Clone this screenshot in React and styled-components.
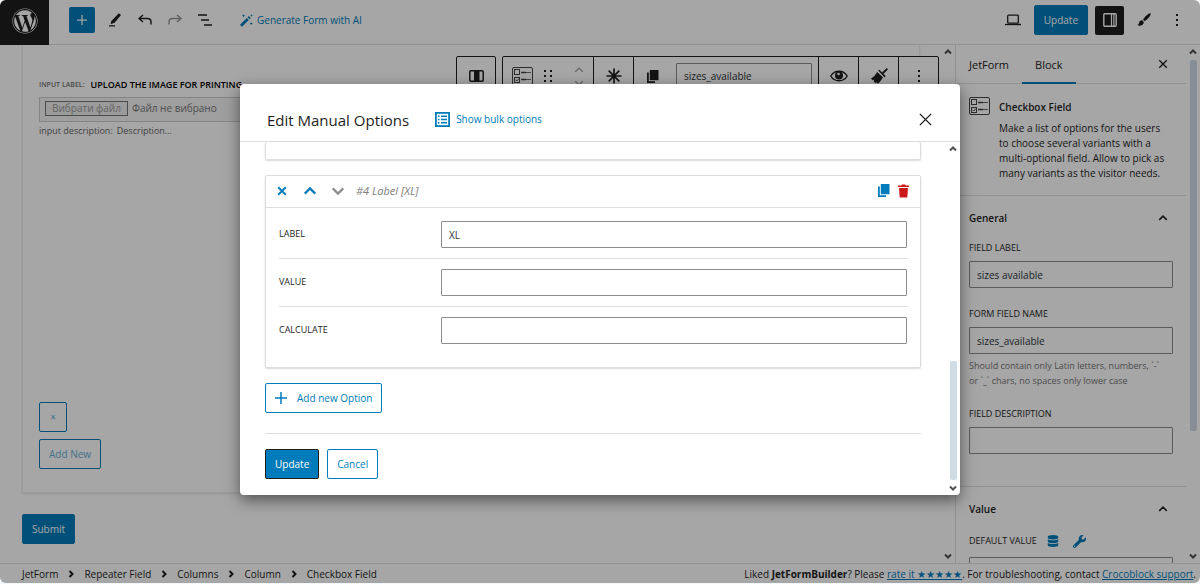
import { useState } from 'react';
import { styled, createGlobalStyle, css } from 'styled-components';
import { FaWordpress, FaDatabase, FaWrench } from 'react-icons/fa';

const GlobalStyle = createGlobalStyle`
  * {
    box-sizing: border-box;
  }

  body {
    margin: 0;
    background: #f4f7fa;
    color: #1e1e1e;
    font-family: 'Open Sans', 'Noto Sans', sans-serif;
    font-size: 10px;
    line-height: 15px;
  }

  button, input {
    font: inherit;
    color: inherit;
  }

  button {
    padding: 0;
    border: 0;
    background: none;
    cursor: pointer;
  }

  a {
    color: #007cba;
  }

  h1, h2, p {
    margin: 0;
  }

  svg {
    display: block;
    flex: none;
  }
`;

const Shell = styled.div`
  position: relative;
  display: flex;
  flex-direction: column;
  height: calc(100vh - 1px);
  overflow: hidden;
  border-radius: 6px;
  background: #fff;
`;

/* ---------- top bar ---------- */

const TopBar = styled.header`
  display: flex;
  justify-content: space-between;
  height: 45px;
  flex: none;
  padding-right: 10px;
  border-bottom: 1px solid #e0e0e0;
`;

const BarGroup = styled.div`
  display: flex;
  align-items: center;
  gap: ${({ $gap }) => $gap}px;
  height: 40px;
`;

const HomeLink = styled.a`
  display: flex;
  align-items: center;
  justify-content: center;
  align-self: flex-start;
  width: 49px;
  height: 45px;
  padding-bottom: 4px;
  margin-right: 10px;
  background: #1e1e1e;
  color: #fff;
`;

const IconButton = styled.button`
  display: flex;
  align-items: center;
  justify-content: center;
  width: ${({ $size = 20 }) => $size}px;
  height: ${({ $size = 20 }) => $size}px;
  border-radius: 2px;
  color: ${({ $color = '#1e1e1e' }) => $color};
  background: ${({ $bg = 'transparent' }) => $bg};
`;

const TextButton = styled.button`
  display: flex;
  align-items: center;
  gap: ${({ $gap = 4 }) => $gap}px;
  color: #007cba;
`;

const AiButton = styled(TextButton)`
  margin-left: 15px;
`;

const Button = styled.button`
  display: flex;
  align-items: center;
  justify-content: center;
  gap: 10px;
  min-width: 28px;
  height: 30px;
  padding: 0 9px;
  border: 1px solid #007cba;
  border-radius: 2px;
  color: #007cba;
  background: #fff;
  white-space: nowrap;

  ${({ $primary }) => $primary && css`
    color: #fff;
    background: #007cba;
    font-weight: 500;
  `}

  ${({ $focused }) => $focused && css`
    border-color: #1e1e1e;
  `}

  ${({ $faded }) => $faded && css`
    color: #66b0d6;
  `}
`;

/* ---------- scrollbar ---------- */

const Rail = styled.div`
  display: flex;
  flex-direction: column;
  align-items: center;
  flex: none;
  width: 14px;
  padding: 3px 0;
  color: #505050;
`;

const Track = styled.div`
  display: flex;
  flex-direction: column;
  justify-content: ${({ $end }) => ($end ? 'flex-end' : 'flex-start')};
  flex: 1;
  padding: 4px 0;
`;

const Thumb = styled.div`
  width: 7px;
  height: ${({ $length }) => $length};
  border-radius: 2px;
  background: #cfdbe5;
`;

function Scrollbar({ length, end }) {
  return (
    <Rail>
      <Chevron dir="up" size={8} weight={4} />
      <Track $end={end}>{length && <Thumb $length={length} />}</Track>
      <Chevron dir="down" size={8} weight={4} />
    </Rail>
  );
}

/* ---------- canvas ---------- */

const Main = styled.div`
  display: flex;
  flex: 1;
  min-height: 0;
`;

const Editor = styled.main`
  position: relative;
  display: flex;
  flex: 1;
  min-width: 0;
`;

const Canvas = styled.div`
  display: flex;
  flex-direction: column;
  align-items: flex-start;
  flex: 1;
  padding: 0 21px 19px 22px;
`;

const FormCard = styled.section`
  display: flex;
  flex-direction: column;
  align-items: flex-start;
  align-self: stretch;
  flex: 1;
  margin-bottom: 21px;
  padding: 32px 16px 23px;
  border: 1px solid #eee;
  border-top: 0;
  box-shadow: 0 1px 2px rgba(0, 0, 0, 0.1);
`;

const InputLabel = styled.div`
  display: flex;
  align-items: center;
  gap: 6px;
  margin-bottom: 5px;
  font-size: 9px;
  font-weight: 600;
  color: #000;

  span {
    color: #757575;
    font-size: 7px;
  }
`;

const FilePicker = styled.label`
  display: flex;
  align-items: center;
  gap: 4px;
  width: 60%;
  height: 25px;
  padding: 0 5px 2px;
  border: 1px solid #ccc;
  background: #f4f4f4;
  color: #777;

  input {
    position: absolute;
    opacity: 0;
    width: 1px;
    height: 1px;
  }

  span {
    padding: 0 6px;
    line-height: 13px;
    border: 1px solid #757575;
    background: #efefef;
    color: #999;
  }
`;

const FieldNote = styled.p`
  display: flex;
  gap: 4px;
  margin-top: 1px;
  font-size: 9px;
  color: #666;
`;

const CardActions = styled.div`
  display: flex;
  flex-direction: column;
  align-items: flex-start;
  gap: 7px;
  margin-top: auto;
`;

const BlockToolbar = styled.div`
  position: absolute;
  top: 11px;
  right: 16px;
  display: flex;
  gap: 6px;
`;

const ToolGroup = styled.div`
  display: flex;
  height: 40px;
  border: 1px solid #1e1e1e;
  border-radius: 2px;
  background: #fff;
`;

const ToolCell = styled.div`
  display: flex;
  align-items: center;
  justify-content: ${({ $start }) => ($start ? 'flex-start' : 'center')};
  gap: ${({ $gap = 0 }) => $gap}px;
  width: ${({ $width = 40 }) => $width}px;
  padding-left: ${({ $start = 0 }) => $start}px;

  & + & {
    border-left: 1px solid #1e1e1e;
  }
`;

const Steppers = styled.div`
  display: flex;
  flex-direction: column;
  gap: 3px;
  color: #949494;
`;

const TextInput = styled.input`
  width: ${({ $width = '100%' }) => $width};
  height: 27px;
  padding: 0 7px;
  border: 1px solid #8c8c8c;
  border-radius: 1px;
  background: #fff;
  color: #2c3338;
  outline: none;
`;

/* ---------- sidebar ---------- */

const Sidebar = styled.aside`
  display: flex;
  flex: none;
  width: 245px;
  overflow: hidden;
  border-left: 1px solid #e0e0e0;
`;

const SidebarBody = styled.div`
  flex: 1;
  overflow: hidden;
`;

const Tabs = styled.div`
  display: flex;
  align-items: center;
  height: 39px;
  padding-right: 16px;
  border-bottom: 1px solid #e0e0e0;
`;

const Tab = styled.button`
  height: 39px;
  padding: 0 13px;
  font-size: 11px;
  font-weight: 500;
  box-shadow: inset 0 ${({ $active }) => ($active ? -2 : 0)}px 0 #007cba;
`;

const Push = styled.div`
  flex: 1;
`;

const BlockInfo = styled.div`
  display: flex;
  gap: 9px;
  padding: 13px 0 14px 13px;
  border-bottom: 1px solid #e0e0e0;

  h2 {
    margin: 3px 0 6px;
    font-size: 10px;
    line-height: 15px;
    font-weight: 600;
  }
`;

const Panel = styled.section`
  padding: 0 13px 32px;
  border-bottom: 1px solid #e0e0e0;
`;

const PanelTitle = styled.button`
  display: flex;
  align-items: center;
  justify-content: space-between;
  width: 100%;
  height: 44px;
  padding-right: 5px;
  font-weight: 600;
`;

const Field = styled.div`
  display: flex;
  flex-direction: column;
  margin-bottom: ${({ $last }) => ($last ? 0 : 18)}px;

  p {
    margin-top: 4px;
    font-size: 9px;
    color: #757575;
    white-space: nowrap;
  }
`;

const FieldLabel = styled.label`
  display: flex;
  align-items: center;
  gap: 10px;
  margin-bottom: 6px;
  font-size: 9px;
  line-height: ${({ $tall }) => ($tall ? 20 : 15)}px;
  font-weight: 500;
  text-transform: uppercase;

  svg {
    color: #007cba;
  }

  svg + svg {
    margin-left: 4px;
  }
`;

/* ---------- footer ---------- */

const Footer = styled.footer`
  display: flex;
  align-items: center;
  justify-content: space-between;
  flex: none;
  height: 20px;
  padding: 1px 4px 0 22px;
  border-top: 1px solid #e0e0e0;
  white-space: nowrap;
`;

const Crumbs = styled.nav`
  display: flex;
  align-items: center;
  gap: 9px;
`;

/* ---------- modal ---------- */

const Overlay = styled.div`
  position: absolute;
  inset: 0;
  display: flex;
  align-items: flex-start;
  justify-content: center;
  padding-top: 84px;
  background: rgba(0, 0, 0, 0.35);
`;

const Modal = styled.div`
  width: 60%;
  overflow: hidden;
  border-radius: 4px;
  background: #fff;
  box-shadow: 0 5px 15px rgba(0, 0, 0, 0.5);
`;

const ModalHeader = styled.header`
  display: flex;
  align-items: center;
  height: 58px;
  padding: 14px 25px 0 27px;
  border-bottom: 1px solid #ddd;

  h1 {
    margin-right: 26px;
    font-size: 15px;
    line-height: 22px;
    font-weight: 500;
  }
`;

const ModalMain = styled.div`
  display: flex;
`;

const ModalBody = styled.div`
  flex: 1;
  padding: 0 25px 16px;
`;

const OptionCard = styled.section`
  margin-bottom: 15px;
  border: 1px solid #ddd;
  border-radius: 2px;
  box-shadow: 0 1px 2px rgba(0, 0, 0, 0.15);
`;

// only the lower edge of the scrolled-out option stays visible
const OptionCardTail = styled(OptionCard)`
  height: 18px;
  border-top: 0;
`;

const OptionHeader = styled.div`
  display: flex;
  align-items: center;
  gap: 8px;
  height: 32px;
  padding: 0 11px 2px 6px;
  border-bottom: 1px solid #ddd;

  em {
    font-size: 11px;
    color: #808080;
  }
`;

const OptionFields = styled.div`
  padding: 3px 13px 13px;
`;

const OptionRow = styled.div`
  display: flex;
  align-items: center;
  padding: 10px 0;

  & + & {
    border-top: 1px solid #ddd;
  }

  label {
    width: 162px;
    flex: none;
    padding-bottom: 3px;
    font-size: 9px;
    text-transform: uppercase;
  }
`;

const ModalActions = styled.div`
  display: flex;
  gap: 8px;
  margin-top: 20px;
  padding-top: 15px;
  border-top: 1px solid #ddd;
`;

/* ---------- icons ---------- */

function Icon({ size = 16, height, box = '0 0 24 24', weight = 1.5, children }) {
  return (
    <svg width={size} height={height || size} viewBox={box} fill="none" stroke="currentColor" strokeWidth={weight} aria-hidden="true">
      {children}
    </svg>
  );
}

function Chevron({ dir, size = 10, weight = 2 }) {
  const paths = {
    up: 'M2 11 8 5l6 6',
    down: 'm2 5 6 6 6-6',
    right: 'm5 2 6 6-6 6',
  };
  return (
    <Icon size={size} box="0 0 16 16" weight={weight}>
      <path d={paths[dir]} />
    </Icon>
  );
}

function Cross({ size = 10, weight = 2 }) {
  return (
    <Icon size={size} box="0 0 16 16" weight={weight}>
      <path d="m2 2 12 12M14 2 2 14" />
    </Icon>
  );
}

function Plus({ size = 12, weight = 1.5 }) {
  return (
    <Icon size={size} box="0 0 12 12" weight={weight}>
      <path d="M6 0v12M0 6h12" />
    </Icon>
  );
}

function CheckboxFieldIcon() {
  return (
    <Icon size={21} height={18} box="0 0 21 18" weight={1}>
      <g stroke="#444">
        <rect x=".5" y=".5" width="20" height="17" rx="1.5" />
        <rect x="2.5" y="2.5" width="5" height="5" />
        <rect x="2.5" y="10.5" width="5" height="5" />
        <path d="m3.5 12.700 1.300 1.300L7 11.500" />
        <path d="M9 5.500h10M9 12.500h10" strokeWidth=".8" />
        <path d="M9 5.500h5M9 12.500h5" strokeWidth="1.5" />
      </g>
    </Icon>
  );
}

function CopyIcon({ size = 13 }) {
  return (
    <svg width={size} height={size} viewBox="0 0 13 13" fill="currentColor" aria-hidden="true">
      <path d="M1 2.500h1.800v8.700H9V13H1z" />
      <path d="M3.800 0h8.700v10.200H3.800z" />
    </svg>
  );
}

function DotsIcon() {
  return (
    <svg width="4" height="14" viewBox="0 0 4 14" fill="currentColor" aria-hidden="true">
      <path d="M1 1h2v2H1zM1 6h2v2H1zM1 11h2v2H1z" />
    </svg>
  );
}

function DragIcon() {
  return (
    <svg width="8" height="12" viewBox="0 0 8 12" fill="currentColor" aria-hidden="true">
      <path d="M0 0h2v2H0zM6 0h2v2H6zM0 5h2v2H0zM6 5h2v2H6zM0 10h2v2H0zM6 10h2v2H6z" />
    </svg>
  );
}

function PencilIcon() {
  return (
    <svg width="14" height="14" viewBox="0 0 14 14" fill="currentColor" aria-hidden="true">
      <path d="M10.800.2 13 2 6.600 9.800 2.600 11.300 3.400 7.900z" />
      <path d="M1 12.200h6v1.300H1z" />
    </svg>
  );
}

function UndoIcon({ flip }) {
  return (
    <Icon size={14} height={12} box="0 0 14 12" weight={1.4}>
      <path d={flip ? 'M9 1l4 3.500L9 8M13 4.500H4.500C2.500 4.500 1 6 1 8v2.500' : 'M5 1 1 4.500 5 8M1 4.500h8.500c2 0 3.500 1.500 3.500 3.500v2.500'} />
    </Icon>
  );
}

function OutlineIcon() {
  return (
    <Icon size={16} height={12} box="0 0 16 12" weight={1.4}>
      <path d="M1 1h9M4 6h8M7 11h8" />
    </Icon>
  );
}

function WandIcon() {
  return (
    <svg width="13" height="13" viewBox="0 0 13 13" fill="currentColor" aria-hidden="true">
      <path d="M0 10.800 6.800 4l2 2L2 12.800zM7.500 3.300l1.300-1.200 2 2-1.200 1.200z" />
      <path d="m3.500 0 .5 1.300 1.300.5-1.300.5-.5 1.300L3 2.300l-1.300-.5L3 1.300zM11.200 7.700l.4 1.300 1.300.5-1.300.5-.4 1.300-.5-1.300-1.300-.5 1.300-.5zM11.700 0l.4 1 .9.400-.9.4-.4.9-.4-.9-1-.4 1-.4z" />
    </svg>
  );
}

function LaptopIcon() {
  return (
    <Icon size={16} height={12} box="0 0 16 12" weight={1.3}>
      <rect x="2.7" y="1.2" width="10.6" height="8" rx=".8" />
      <path d="M0 10.500h16" />
    </Icon>
  );
}

function PanelIcon() {
  return (
    <Icon size={14} box="0 0 14 14" weight={1.4}>
      <rect x=".8" y=".8" width="12.4" height="12.4" rx="1" />
      <path d="M8.500 1v12M10.900 1v12" strokeWidth="1.2" />
    </Icon>
  );
}

function BrushIcon() {
  return (
    <svg width="14" height="14" viewBox="0 0 14 14" fill="currentColor" aria-hidden="true">
      <path d="M13.700.3c-2-.3-6 3.500-7.700 6.200l1.600 1.700C10.300 6.500 14.300 2.400 13.700.3z" />
      <path d="M5.300 7.300C3.700 7 2.400 8 2.200 9.500 2 11 1.200 11.600.2 12c2.200 1.500 6.500.8 6.600-3z" />
    </svg>
  );
}

function ColumnsIcon() {
  return (
    <svg width="15" height="12" viewBox="0 0 15 12" aria-hidden="true">
      <rect x=".8" y=".8" width="13.4" height="10.4" rx="1" fill="none" stroke="currentColor" strokeWidth="1.5" />
      <path d="M5 1h5.500v10H5z" fill="currentColor" />
    </svg>
  );
}

function AsteriskIcon() {
  return (
    <Icon size={16} box="0 0 16 16" weight={1.7}>
      <path d="M8 .5v15M.5 8h15M2.700 2.700l10.600 10.600M13.300 2.700 2.700 13.300" />
    </Icon>
  );
}

function EyeIcon() {
  return (
    <svg width="18" height="12" viewBox="0 0 18 12" aria-hidden="true">
      <path d="M.8 6C4.500-.4 13.500-.4 17.200 6c-3.700 6.400-12.700 6.400-16.400 0z" fill="none" stroke="currentColor" strokeWidth="1.4" />
      <circle cx="9" cy="5.500" r="4" fill="currentColor" />
      <circle cx="8.500" cy="4" r="1.3" fill="#fff" />
    </svg>
  );
}

function BroomIcon() {
  return (
    <svg width="18" height="16" viewBox="0 0 18 16" fill="currentColor" aria-hidden="true">
      <path d="M16.700 0 18 1.300l-4.600 4.600-1.300-1.300z" />
      <path d="m8.200 2.500 1.200-.8 2.200 2.300 2.700 2.600 1.200 1.700-.9 1.300z" />
      <path d="m7.200 4 5.600 5.300c-.7 1.700-2.300 4.200-4.800 6.500l-1.800-1.600-.6 1-2-1.900.7-1.700-1.700.6L1 10.500c2.500-1.500 5-4 6.200-6.500z" />
    </svg>
  );
}

function BulkIcon() {
  return (
    <svg width="15" height="15" viewBox="0 0 15 15" aria-hidden="true">
      <rect x=".9" y=".9" width="13.2" height="13.2" fill="none" stroke="currentColor" strokeWidth="1.8" />
      <path d="M3 3.500h1.500V5H3zM3 6.700h1.500v1.500H3zM3 10h1.500v1.500H3zM6 3.500h6V5H6zM6 6.700h6v1.500H6zM6 10h6v1.500H6z" fill="currentColor" />
    </svg>
  );
}

function TrashIcon() {
  return (
    <svg width="11" height="14" viewBox="0 0 11 14" fill="currentColor" aria-hidden="true">
      <path d="M0 1.500h3L4 .5h3l1 1h3V3H0zM1 4h9l-.7 9.500H1.700z" />
    </svg>
  );
}

/* ---------- page ---------- */

const crumbs = ['JetForm', 'Repeater Field', 'Columns', 'Column', 'Checkbox Field'];

function OptionsModal() {
  const [option, setOption] = useState({ label: 'XL', value: '', calculate: '' });

  function handleChange(key, value) {
    setOption(prev => ({ ...prev, [key]: value }));
  }

  return (
    <Overlay>
      <Modal role="dialog" aria-labelledby="modal-title">
        <ModalHeader>
          <h1 id="modal-title">Edit Manual Options</h1>
          <TextButton $gap={6} type="button">
            <BulkIcon />
            Show bulk options
          </TextButton>
          <Push />
          <IconButton type="button" aria-label="Close">
            <Cross size={15} weight={1.5} />
          </IconButton>
        </ModalHeader>
        <ModalMain>
          <ModalBody>
            <OptionCardTail />
            <OptionCard>
              <OptionHeader>
                <IconButton type="button" $color="#007cba" aria-label="Collapse">
                  <Cross size={10} weight={3} />
                </IconButton>
                <IconButton type="button" $color="#007cba" aria-label="Move up">
                  <Chevron dir="up" size={14} weight={2.5} />
                </IconButton>
                <IconButton type="button" $color="#8c8c8c" aria-label="Move down">
                  <Chevron dir="down" size={14} weight={2.5} />
                </IconButton>
                <em>#4 Label [{option.label}]</em>
                <Push />
                <IconButton type="button" $size={13} $color="#007cba" aria-label="Duplicate">
                  <CopyIcon />
                </IconButton>
                <IconButton type="button" $size={11} $color="#cc1818" aria-label="Remove">
                  <TrashIcon />
                </IconButton>
              </OptionHeader>
              <OptionFields>
                {Object.keys(option).map(key => (
                  <OptionRow key={key}>
                    <label htmlFor={`option-${key}`}>{key}</label>
                    <TextInput
                      id={`option-${key}`}
                      value={option[key]}
                      onChange={event => handleChange(key, event.target.value)}
                    />
                  </OptionRow>
                ))}
              </OptionFields>
            </OptionCard>
            <Button type="button">
              <Plus />
              Add new Option
            </Button>
            <ModalActions>
              <Button type="button" $primary $focused>Update</Button>
              <Button type="button">Cancel</Button>
            </ModalActions>
          </ModalBody>
          <Scrollbar length="119px" end />
        </ModalMain>
      </Modal>
    </Overlay>
  );
}

export default function App() {
  return (
    <>
      <GlobalStyle />
      <Shell>
        <TopBar>
          <BarGroup $gap={10}>
            <HomeLink href="#" aria-label="WordPress">
              <FaWordpress size={26} />
            </HomeLink>
            <IconButton $size={26} $bg="#007cba" $color="#fff" type="button" aria-label="Add block">
              <Plus size={10} />
            </IconButton>
            <IconButton type="button" aria-label="Tools"><PencilIcon /></IconButton>
            <IconButton type="button" aria-label="Undo"><UndoIcon /></IconButton>
            <IconButton type="button" $color="#949494" aria-label="Redo"><UndoIcon flip /></IconButton>
            <IconButton type="button" aria-label="Outline"><OutlineIcon /></IconButton>
            <AiButton type="button">
              <WandIcon />
              Generate Form with AI
            </AiButton>
          </BarGroup>
          <BarGroup $gap={7}>
            <IconButton $size={28} type="button" aria-label="Preview"><LaptopIcon /></IconButton>
            <Button $primary type="button">Update</Button>
            <IconButton $size={29} $bg="#1e1e1e" $color="#fff" type="button" aria-label="Settings"><PanelIcon /></IconButton>
            <IconButton $size={26} type="button" aria-label="Styles"><BrushIcon /></IconButton>
            <IconButton $size={26} type="button" aria-label="Options"><DotsIcon /></IconButton>
          </BarGroup>
        </TopBar>
        <Main>
          <Editor>
            <Canvas>
              <FormCard>
                <InputLabel><span>INPUT LABEL:</span> UPLOAD THE IMAGE FOR PRINTING</InputLabel>
                <FilePicker>
                  <input type="file" />
                  <span>Вибрати файл</span>
                  Файл не вибрано
                </FilePicker>
                <FieldNote>
                  <span>input description:</span>
                  <span>Description...</span>
                </FieldNote>
                <CardActions>
                  <Button $faded type="button">×</Button>
                  <Button $faded type="button">Add New</Button>
                </CardActions>
              </FormCard>
              <Button $primary type="button">Submit</Button>
            </Canvas>
            <Scrollbar />
            <BlockToolbar>
              <ToolGroup>
                <ToolCell $width={38}><ColumnsIcon /></ToolCell>
              </ToolGroup>
              <ToolGroup>
                <ToolCell $width={90} $gap={11} $start={9}>
                  <CheckboxFieldIcon />
                  <DragIcon />
                  <Push />
                  <Steppers>
                    <Chevron dir="up" />
                    <Chevron dir="down" />
                  </Steppers>
                  <Push />
                </ToolCell>
                <ToolCell><AsteriskIcon /></ToolCell>
                <ToolCell $width={185} $gap={17} $start={12}>
                  <CopyIcon />
                  <TextInput $width="136px" defaultValue="sizes_available" aria-label="Form field name" />
                </ToolCell>
                <ToolCell><EyeIcon /></ToolCell>
                <ToolCell><BroomIcon /></ToolCell>
                <ToolCell><DotsIcon /></ToolCell>
              </ToolGroup>
            </BlockToolbar>
          </Editor>
          <Sidebar>
            <SidebarBody>
              <Tabs>
                <Tab type="button">JetForm</Tab>
                <Tab type="button" $active>Block</Tab>
                <Push />
                <IconButton $size={14} type="button" aria-label="Close settings">
                  <Cross size={10} weight={2.2} />
                </IconButton>
              </Tabs>
              <BlockInfo>
                <CheckboxFieldIcon />
                <div>
                  <h2>Checkbox Field</h2>
                  <p>
                    Make a list of options for the users<br />
                    to choose several variants with a<br />
                    multi-optional field. Allow to pick as<br />
                    many variants as the visitor needs.
                  </p>
                </div>
              </BlockInfo>
              <Panel>
                <PanelTitle type="button">General <Chevron dir="up" weight={2.5} /></PanelTitle>
                <Field>
                  <FieldLabel htmlFor="field-label">Field label</FieldLabel>
                  <TextInput id="field-label" defaultValue="sizes available" />
                </Field>
                <Field>
                  <FieldLabel htmlFor="field-name">Form field name</FieldLabel>
                  <TextInput id="field-name" defaultValue="sizes_available" />
                  <p>
                    Should contain only Latin letters, numbers, `-`<br />
                    or `_` chars, no spaces only lower case
                  </p>
                </Field>
                <Field $last>
                  <FieldLabel htmlFor="field-description">Field description</FieldLabel>
                  <TextInput id="field-description" />
                </Field>
              </Panel>
              <Panel>
                <PanelTitle type="button">Value <Chevron dir="up" weight={2.5} /></PanelTitle>
                <Field $last>
                  <FieldLabel $tall htmlFor="default-value">
                    Default value
                    <FaDatabase size={12} />
                    <FaWrench size={13} />
                  </FieldLabel>
                  <TextInput id="default-value" />
                </Field>
              </Panel>
            </SidebarBody>
            <Scrollbar length="371px" />
          </Sidebar>
        </Main>
        <Footer>
          <Crumbs>
            {crumbs.map((crumb, i) => (
              <Crumbs as="span" key={crumb}>
                {i > 0 && <Chevron dir="right" size={8} weight={4} />}
                {crumb}
              </Crumbs>
            ))}
          </Crumbs>
          <span>
            Liked <strong>JetFormBuilder</strong>? Please <a href="#">rate it ★★★★★</a>. For troubleshooting, contact <a href="#">Crocoblock support</a>.
          </span>
        </Footer>
        <OptionsModal />
      </Shell>
    </>
  );
}
